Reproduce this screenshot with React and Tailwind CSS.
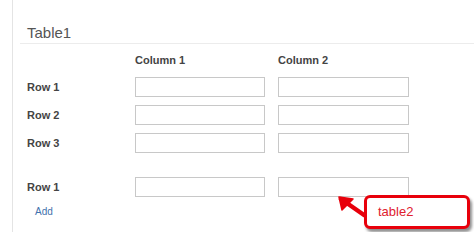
const rows = [
  { label: 'Row 1', gap: 'mb-[8px]' },
  { label: 'Row 2', gap: 'mb-[8px]' },
  { label: 'Row 3', gap: 'mb-[24px]' },
];

const Cell = () => (
  <input
    type="text"
    className="h-[20px] border border-[#c8c8c8] bg-white outline-none"
  />
);

const Row = ({ label, gap = '' }) => (
  <div className={`flex items-center h-[20px] ${gap}`}>
    <div className="w-[115px] pl-[7px] text-[11px] font-bold text-[#444]">{label}</div>
    <div className="w-[130px] flex flex-col"><Cell /></div>
    <div className="w-[13px]" />
    <div className="w-[131px] flex flex-col"><Cell /></div>
  </div>
);

export default function App() {
  return (
    <div
      className="relative w-[474px] h-[232px] overflow-hidden bg-white"
      style={{ fontFamily: '"Liberation Sans", Arial, sans-serif' }}
    >
      <div className="ml-3 h-full border-l border-[#e4e4e4] pl-[7px]">
        {/* Header */}
        <div className="pt-[22px] border-b border-[#ececec]">
          <h2 className="pl-[7px] h-[21px] text-[15px] leading-[21px] text-[#555]">Table1</h2>
        </div>

        {/* Column headings */}
        <div className="flex items-center h-[33px] text-[11px] font-bold text-[#444]">
          <div className="w-[115px]" />
          <div className="w-[143px]">Column 1</div>
          <div>Column 2</div>
        </div>

        {rows.map((r, i) => (
          <Row key={i} label={r.label} gap={r.gap} />
        ))}

        <Row label="Row 1" />

        <div className="mt-[9px] pl-[15px] text-[10px] leading-[12px] text-[#3f72ad]">Add</div>
      </div>

      {/* Callout */}
      <svg
        className="absolute left-[334px] top-[192px]"
        width="36"
        height="32"
        viewBox="0 0 36 32"
      >
        <path d="M7 7 L30 23" stroke="#e8000b" strokeWidth="4.5" strokeLinecap="round" fill="none" />
        <polygon points="5,5 19,7 8,18" fill="#e8000b" stroke="#e8000b" strokeWidth="1.5" strokeLinejoin="round" />
      </svg>
      <div className="absolute left-[364px] top-[195px] w-[106px] h-[34px] rounded-[6px] border-[3px] border-[#e8000b] bg-white shadow-[2px_3px_3px_rgba(0,0,0,0.45)] flex items-center pl-[11px]">
        <span className="text-[13px] text-[#e0202e]">table2</span>
      </div>
    </div>
  );
}
